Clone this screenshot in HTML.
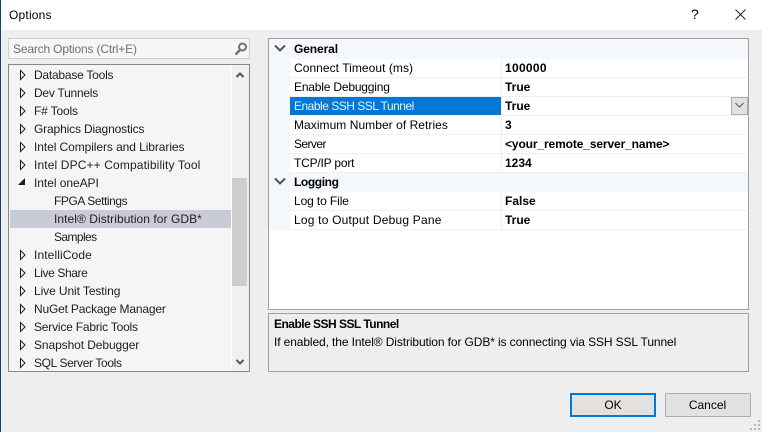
<!DOCTYPE html>
<html><head><meta charset="utf-8">
<style>
html,body{margin:0;padding:0}
body{width:762px;height:432px;overflow:hidden;position:relative;background:#eeeeee;font:12px "Liberation Sans",sans-serif;color:#1e1e1e}
div,svg{position:absolute;box-sizing:border-box}
.t{white-space:nowrap;height:18px;line-height:18px}
.b{font-weight:bold;color:#000}
.k{color:#000}
.l{left:34px}
.s{left:54px}
.n{left:294px;color:#000}
.v{left:505px;font-weight:bold;color:#000}
.sep{left:290px;width:458px;height:1px;background:#f0f0f0}
</style></head><body>
<div style="left:0;top:0;width:762px;height:30px;background:#fff"></div>
<div style="left:0;top:0;width:1px;height:432px;background:#1c3d6e"></div>
<div class="t k" style="left:9px;top:6px;letter-spacing:.2px">Options</div>
<div class="t k" style="left:691px;top:5px;font-size:14px">?</div>
<svg style="left:735px;top:9px" width="11" height="11"><path d="M.5.5l10 10M10.500.5l-10 10" stroke="#222" fill="none"/></svg>

<div style="left:8px;top:38px;width:242px;height:21px;background:#f6f6f6;border:1px solid #cccedb"></div>
<div class="t" style="left:13px;top:40px;color:#717171;letter-spacing:-.17px">Search Options (Ctrl+E)</div>
<svg style="left:234px;top:42px" width="14" height="14"><circle cx="8.500" cy="5" r="3.500" fill="none" stroke="#717171" stroke-width="2"/><path d="M6 8L1.500 12.500" stroke="#717171" stroke-width="2.500"/></svg>

<div style="left:8px;top:64px;width:242px;height:308px;background:#f5f5f5;border:1px solid #828790"></div>
<div style="left:231px;top:65px;width:1px;height:306px;background:#fff"></div>
<div style="left:232px;top:65px;width:17px;height:306px;background:#f0f0f0"></div>
<div style="left:232px;top:178px;width:15px;height:108px;background:#cdcdcd"></div>
<svg style="left:235px;top:71px" width="10" height="8"><path d="M1.500 6L5 2.500 8.500 6" fill="none" stroke="#555" stroke-width="2"/></svg>
<svg style="left:235px;top:358px" width="10" height="8"><path d="M1.500 2L5 5.500 8.500 2" fill="none" stroke="#555" stroke-width="2"/></svg>
<div style="left:10px;top:210px;width:221px;height:18px;background:#c9cbd9"></div>

<svg style="left:0;top:0" width="40" height="372">
<g fill="none" stroke="#1e1e1e"><path d="M20.500 70.500v9l4.500-4.500z"/>
<path d="M20.500 88.500v9l4.500-4.500z"/><path d="M20.500 106.500v9l4.500-4.500z"/><path d="M20.500 124.500v9l4.500-4.500z"/><path d="M20.500 142.500v9l4.500-4.500z"/><path d="M20.500 160.500v9l4.500-4.500z"/>
<path d="M20.500 250.500v9l4.500-4.500z"/><path d="M20.500 268.500v9l4.500-4.500z"/><path d="M20.500 286.500v9l4.500-4.500z"/><path d="M20.500 304.500v9l4.500-4.500z"/><path d="M20.500 322.500v9l4.500-4.500z"/><path d="M20.500 340.500v9l4.500-4.500z"/><path d="M20.500 358.500v9l4.500-4.500z"/></g>
<path d="M25 178v7h-7z" fill="#1e1e1e"/>
</svg>
<div class="t l" style="top:66px;letter-spacing:-.23px">Database Tools</div>
<div class="t l" style="top:84px;letter-spacing:-.25px">Dev Tunnels</div>
<div class="t l" style="top:102px;letter-spacing:-.17px">F# Tools</div>
<div class="t l" style="top:120px;letter-spacing:-.15px">Graphics Diagnostics</div>
<div class="t l" style="top:138px;letter-spacing:-.08px">Intel Compilers and Libraries</div>
<div class="t l" style="top:156px;letter-spacing:.13px">Intel DPC++ Compatibility Tool</div>
<div class="t l" style="top:174px;letter-spacing:-.05px">Intel oneAPI</div>
<div class="t s" style="top:192px;letter-spacing:-.42px">FPGA Settings</div>
<div class="t s" style="top:210px;letter-spacing:.06px">Intel® Distribution for GDB*</div>
<div class="t s" style="top:228px;letter-spacing:-.6px">Samples</div>
<div class="t l" style="top:246px;letter-spacing:.11px">IntelliCode</div>
<div class="t l" style="top:264px;letter-spacing:-.4px">Live Share</div>
<div class="t l" style="top:282px;letter-spacing:-.09px">Live Unit Testing</div>
<div class="t l" style="top:300px;letter-spacing:-.18px">NuGet Package Manager</div>
<div class="t l" style="top:318px;letter-spacing:-.2px">Service Fabric Tools</div>
<div class="t l" style="top:336px;letter-spacing:-.09px">Snapshot Debugger</div>
<div class="t l" style="top:354px;height:17px;overflow:hidden;letter-spacing:-.36px">SQL Server Tools</div>

<div style="left:268px;top:38px;width:481px;height:272px;background:#fff;border:1px solid #a0a0a0"></div>
<div style="left:269px;top:39px;width:479px;height:20px;background:#f4f7fc"></div>
<div style="left:269px;top:59px;width:21px;height:114px;background:#f4f7fc"></div>
<div style="left:269px;top:173px;width:479px;height:19px;background:#f4f7fc"></div>
<div style="left:269px;top:192px;width:21px;height:38px;background:#f4f7fc"></div>
<div class="sep" style="top:77px"></div><div class="sep" style="top:96px"></div><div class="sep" style="top:115px"></div><div class="sep" style="top:134px"></div><div class="sep" style="top:153px"></div><div class="sep" style="top:172px"></div><div class="sep" style="top:210px"></div><div class="sep" style="top:229px"></div>
<div style="left:501px;top:59px;width:1px;height:114px;background:#f0f0f0"></div>
<div style="left:501px;top:192px;width:1px;height:38px;background:#f0f0f0"></div>
<div style="left:290px;top:97px;width:211px;height:18px;background:#0078d7"></div>
<svg style="left:274px;top:44px" width="12" height="9"><path d="M1 1.500L6 6.500 11 1.500" fill="none" stroke="#555" stroke-width="2"/></svg>
<svg style="left:274px;top:177px" width="12" height="9"><path d="M1 1.500L6 6.500 11 1.500" fill="none" stroke="#555" stroke-width="2"/></svg>

<div class="t b" style="left:294px;top:40px;letter-spacing:-.1px">General</div>
<div class="t n" style="top:59px;letter-spacing:.05px">Connect Timeout (ms)</div><div class="t v" style="top:59px;letter-spacing:.3px">100000</div>
<div class="t n" style="top:78px;letter-spacing:-.19px">Enable Debugging</div><div class="t v" style="top:78px">True</div>
<div class="t n" style="top:97px;color:#e8f2fb;letter-spacing:-.5px">Enable SSH SSL Tunnel</div><div class="t v" style="top:97px">True</div>
<div class="t n" style="top:116px;letter-spacing:.05px">Maximum Number of Retries</div><div class="t v" style="top:116px">3</div>
<div class="t n" style="top:135px;letter-spacing:-.58px">Server</div><div class="t v" style="top:135px;letter-spacing:-.12px">&lt;your_remote_server_name&gt;</div>
<div class="t n" style="top:154px;letter-spacing:-.2px">TCP/IP port</div><div class="t v" style="top:154px">1234</div>
<div class="t b" style="left:294px;top:173px;letter-spacing:-.4px">Logging</div>
<div class="t n" style="top:192px;letter-spacing:-.11px">Log to File</div><div class="t v" style="top:192px">False</div>
<div class="t n" style="top:211px;letter-spacing:.2px">Log to Output Debug Pane</div><div class="t v" style="top:211px">True</div>

<div style="left:731px;top:97px;width:17px;height:18px;background:#e1e1e1;border:1px solid #adadad"></div>
<svg style="left:735px;top:102px" width="9" height="7"><path d="M.5 1L4.500 5 8.500 1" fill="none" stroke="#555"/></svg>

<div style="left:268px;top:313px;width:481px;height:59px;background:#eeeeee;border:1px solid #a0a0a0"></div>
<div class="t b" style="left:274px;top:315px;letter-spacing:-.52px">Enable SSH SSL Tunnel</div>
<div class="t k" style="left:274px;top:333px;letter-spacing:-.11px">If enabled, the Intel® Distribution for GDB* is connecting via SSH SSL Tunnel</div>

<div style="left:570px;top:393px;width:86px;height:24px;background:#e1e1e1;border:2px solid #0078d7"></div>
<div class="t k" style="left:570px;top:396px;width:86px;text-align:center">OK</div>
<div style="left:665px;top:393px;width:86px;height:24px;background:#e1e1e1;border:1px solid #adadad"></div>
<div class="t k" style="left:665px;top:396px;width:85px;text-align:center">Cancel</div>
<svg style="left:750px;top:420px" width="12" height="12" fill="#b8b8b8"><rect x="8" y="0" width="2" height="2"/><rect x="4" y="4" width="2" height="2"/><rect x="8" y="4" width="2" height="2"/><rect x="0" y="8" width="2" height="2"/><rect x="4" y="8" width="2" height="2"/><rect x="8" y="8" width="2" height="2"/></svg>
</body></html>
